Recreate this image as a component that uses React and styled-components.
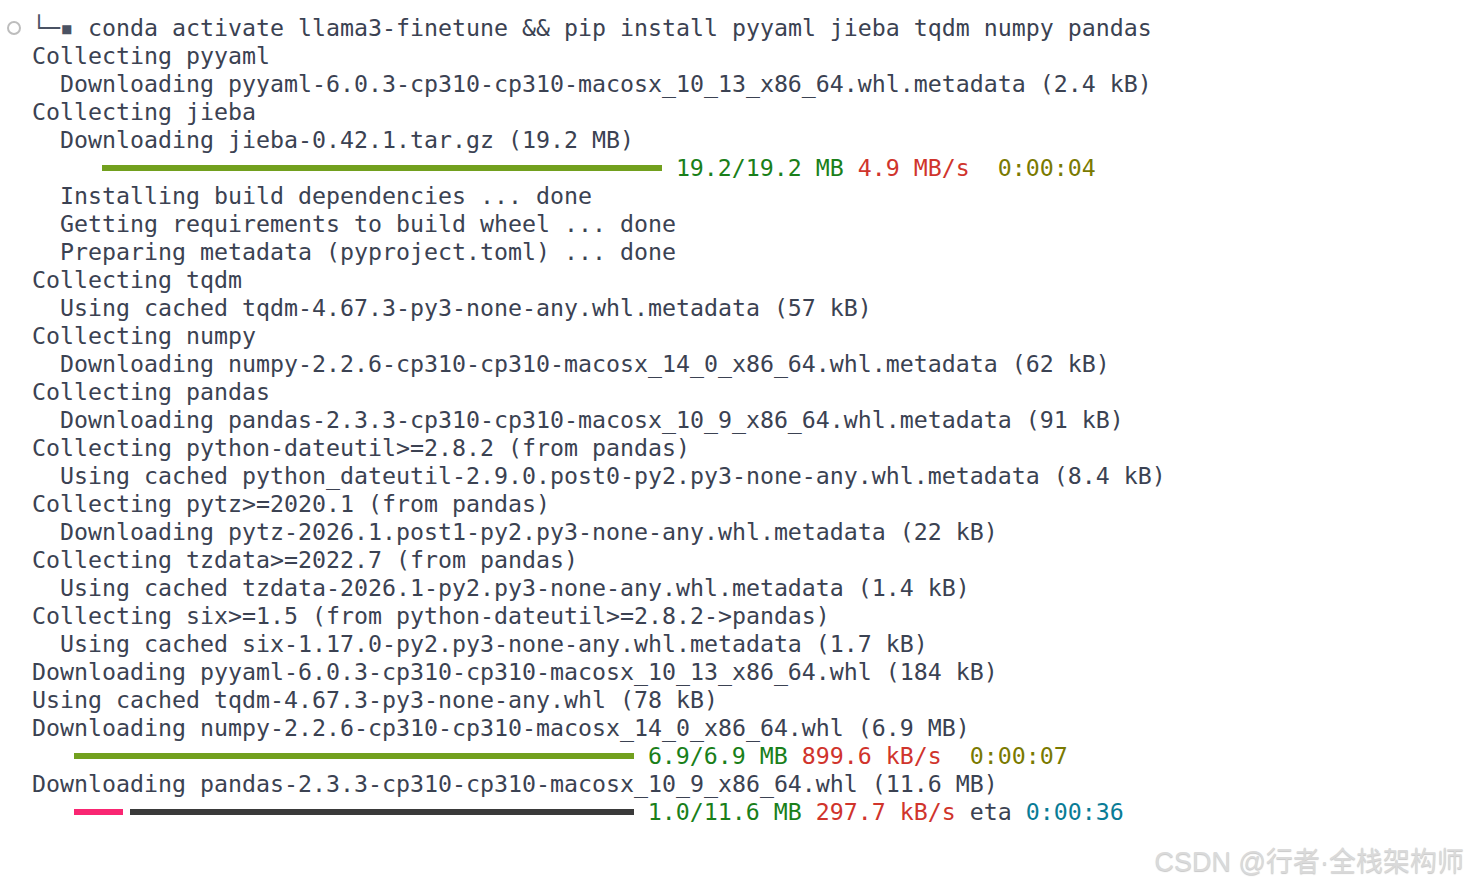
import React from "react";
import styled, { createGlobalStyle } from "styled-components";

const GlobalStyle = createGlobalStyle`
html, body {
  margin: 0;
  padding: 0;
  background: #ffffff;
}
`;

const Screen = styled.div`
position: relative;
width: 1468px;
height: 886px;
overflow: hidden;
background: #ffffff;
`;

const Terminal = styled.div`
display: flex;
flex-direction: column;
padding: 14px 0 0 32px;
font-family: "DejaVu Sans Mono", "Liberation Mono", monospace;
font-size: 23.25px;
color: #3b4252;
`;

const Line = styled.div`
height: 28px;
line-height: 28px;
white-space: pre;
`;

const PromptLine = styled(Line)`
position: relative;
`;

const Ring = styled.span`
position: absolute;
left: -25px;
top: 7px;
width: 10px;
height: 10px;
border: 2.5px solid #bdbdbd;
border-radius: 50%;
`;

const Tree = styled.span`
color: #4a5263;
`;

const BarLine = styled.div`
display: flex;
align-items: center;
height: 28px;
line-height: 28px;
white-space: pre;
padding-left: ${p => p.indent}ch;
`;

const Bar = styled.span`
display: block;
flex: none;
width: ${p => p.cols}ch;
height: 6px;
margin-right: ${p => p.gap || 0}ch;
background: ${p => p.color};
`;

const Readout = styled.span`
white-space: pre;
`;

const Tone = styled.span`
color: ${p => p.color};
`;

const Watermark = styled.div`
position: absolute;
right: 4px;
bottom: 8px;
font-family: "Liberation Sans", "Noto Sans CJK SC", sans-serif;
font-size: 27px;
line-height: 32px;
color: #dadada;
text-shadow: 0 1px 1px rgba(0, 0, 0, 0.22);
white-space: pre;
`;

const GREEN = "#1a7f1a";
const RED = "#d0342c";
const OLIVE = "#7a7a00";
const TEAL = "#0a7c96";

const lines1 = [
  "Collecting pyyaml",
  "  Downloading pyyaml-6.0.3-cp310-cp310-macosx_10_13_x86_64.whl.metadata (2.4 kB)",
  "Collecting jieba",
  "  Downloading jieba-0.42.1.tar.gz (19.2 MB)",
];

const lines2 = [
  "  Installing build dependencies ... done",
  "  Getting requirements to build wheel ... done",
  "  Preparing metadata (pyproject.toml) ... done",
  "Collecting tqdm",
  "  Using cached tqdm-4.67.3-py3-none-any.whl.metadata (57 kB)",
  "Collecting numpy",
  "  Downloading numpy-2.2.6-cp310-cp310-macosx_14_0_x86_64.whl.metadata (62 kB)",
  "Collecting pandas",
  "  Downloading pandas-2.3.3-cp310-cp310-macosx_10_9_x86_64.whl.metadata (91 kB)",
  "Collecting python-dateutil>=2.8.2 (from pandas)",
  "  Using cached python_dateutil-2.9.0.post0-py2.py3-none-any.whl.metadata (8.4 kB)",
  "Collecting pytz>=2020.1 (from pandas)",
  "  Downloading pytz-2026.1.post1-py2.py3-none-any.whl.metadata (22 kB)",
  "Collecting tzdata>=2022.7 (from pandas)",
  "  Using cached tzdata-2026.1-py2.py3-none-any.whl.metadata (1.4 kB)",
  "Collecting six>=1.5 (from python-dateutil>=2.8.2->pandas)",
  "  Using cached six-1.17.0-py2.py3-none-any.whl.metadata (1.7 kB)",
  "Downloading pyyaml-6.0.3-cp310-cp310-macosx_10_13_x86_64.whl (184 kB)",
  "Using cached tqdm-4.67.3-py3-none-any.whl (78 kB)",
  "Downloading numpy-2.2.6-cp310-cp310-macosx_14_0_x86_64.whl (6.9 MB)",
];

export default function App() {
  return (
    <Screen>
      <GlobalStyle />
      <Terminal>
        <PromptLine>
          <Ring />
          <Tree>└─▪</Tree> conda activate llama3-finetune && pip install pyyaml jieba tqdm numpy pandas
        </PromptLine>
        {lines1.map((t, i) => <Line key={"a" + i}>{t}</Line>)}
        <BarLine indent={5}>
          <Bar cols={40} gap={1} color="#72a01e" />
          <Readout>
            <Tone color={GREEN}>19.2/19.2 MB</Tone>{" "}<Tone color={RED}>4.9 MB/s</Tone>{"  "}<Tone color={OLIVE}>0:00:04</Tone>
          </Readout>
        </BarLine>
        {lines2.map((t, i) => <Line key={"b" + i}>{t}</Line>)}
        <BarLine indent={3}>
          <Bar cols={40} gap={1} color="#72a01e" />
          <Readout>
            <Tone color={GREEN}>6.9/6.9 MB</Tone>{" "}<Tone color={RED}>899.6 kB/s</Tone>{"  "}<Tone color={OLIVE}>0:00:07</Tone>
          </Readout>
        </BarLine>
        <Line>Downloading pandas-2.3.3-cp310-cp310-macosx_10_9_x86_64.whl (11.6 MB)</Line>
        <BarLine indent={3}>
          <Bar cols={3.5} gap={0.5} color="#f92672" />
          <Bar cols={36} gap={1} color="#3a3a3a" />
          <Readout>
            <Tone color={GREEN}>1.0/11.6 MB</Tone>{" "}<Tone color={RED}>297.7 kB/s</Tone>{" eta "}<Tone color={TEAL}>0:00:36</Tone>
          </Readout>
        </BarLine>
      </Terminal>
      <Watermark>CSDN @行者·全栈架构师</Watermark>
    </Screen>
  );
}
